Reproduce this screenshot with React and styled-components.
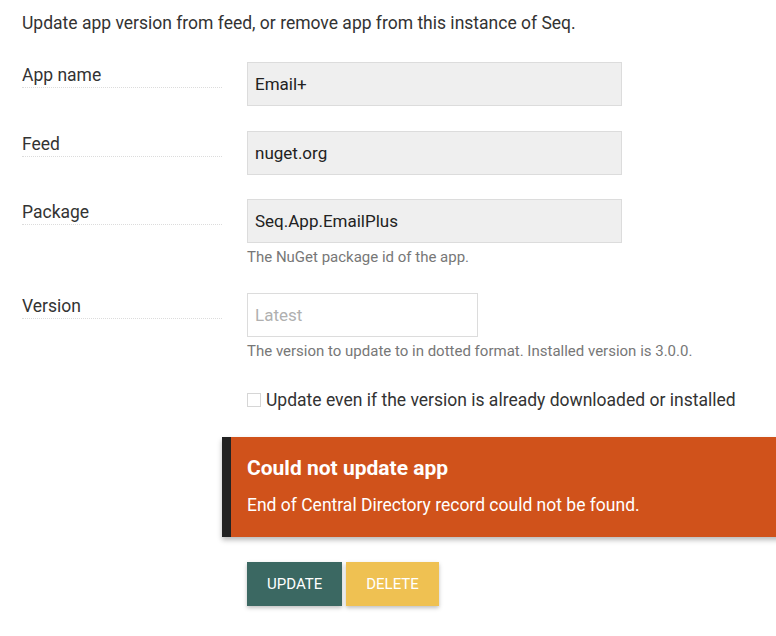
import React from "react";
import styled, { createGlobalStyle } from "styled-components";

const Global = createGlobalStyle`
  html, body { margin: 0; padding: 0; background: #fff; overflow: hidden; }
  body { font-family: Roboto, "Liberation Sans", sans-serif; color: #333; }
  * { box-sizing: border-box; }
`;

const Page = styled.div`
  padding: 11px 0 30px 22px;
  width: 776px;
`;

const Intro = styled.p`
  margin: 0 0 27px;
  font-size: 17.5px;
  line-height: 24px;
  color: #333;
`;

const Row = styled.div`
  display: grid;
  grid-template-columns: 200px 1fr;
  align-items: start;
  margin-bottom: ${(p) => p.$gap || 25}px;
`;

const Label = styled.label`
  display: block;
  font-size: 17.5px;
  line-height: 24px;
  padding-top: 1px;
  color: #333;
  border-bottom: 1px dotted #dcdcdc;
`;

const Field = styled.div`
  padding-left: 25px;
`;

const Input = styled.input`
  display: block;
  width: ${(p) => p.$width || 375}px;
  height: 44px;
  padding: 0 7px;
  font-family: Roboto, "Liberation Sans", sans-serif;
  font-size: 17px;
  color: #222;
  background: ${(p) => (p.readOnly ? "#efefef" : "#fff")};
  border: 1px solid #dcdcdc;
  border-radius: 0;
  outline: none;
  &::placeholder { color: #b0b0b0; }
`;

const Help = styled.div`
  margin-top: 4px;
  font-size: 15px;
  line-height: 20px;
  color: #777;
`;

const CheckRow = styled.label`
  display: flex;
  align-items: center;
  gap: 5px;
  font-size: 17.5px;
  line-height: 24px;
  color: #333;
`;

const Box = styled.span`
  display: inline-block;
  width: 14px;
  height: 14px;
  border: 1px solid #d6d6d6;
  background: #fff;
`;

const ErrorBox = styled.div`
  background: #d0521b;
  border-left: 9px solid #222;
  padding: 18px 24px 20px 16px;
  color: #fff;
  box-shadow: 0 3px 5px rgba(0, 0, 0, 0.28);
  margin-right: -22px;
`;

const ErrorTitle = styled.div`
  font-size: 21px;
  font-weight: 700;
  line-height: 26px;
  margin-bottom: 12px;
`;

const ErrorText = styled.div`
  font-size: 17.5px;
  line-height: 24px;
`;

const Buttons = styled.div`
  display: flex;
  gap: 4px;
  padding-left: 25px;
`;

const Button = styled.button`
  height: 44px;
  padding: 0 ${(p) => p.$pad || 20}px;
  border: none;
  border-radius: 0;
  font-family: Roboto, "Liberation Sans", sans-serif;
  font-size: 15px;
  text-transform: uppercase;
  color: #fff;
  background: ${(p) => p.$bg};
  box-shadow: 0 2px 4px rgba(0, 0, 0, 0.25);
  cursor: pointer;
`;

export default function App() {
  return (
    <>
      <Global />
      <Page>
        <Intro>Update app version from feed, or remove app from this instance of Seq.</Intro>
        <Row>
          <Label>App name</Label>
          <Field>
            <Input readOnly value="Email+" />
          </Field>
        </Row>
        <Row $gap={24}>
          <Label>Feed</Label>
          <Field>
            <Input readOnly value="nuget.org" />
          </Field>
        </Row>
        <Row $gap={26}>
          <Label>Package</Label>
          <Field>
            <Input readOnly value="Seq.App.EmailPlus" />
            <Help>The NuGet package id of the app.</Help>
          </Field>
        </Row>
        <Row $gap={27}>
          <Label>Version</Label>
          <Field>
            <Input $width={231} placeholder="Latest" />
            <Help>The version to update to in dotted format. Installed version is 3.0.0.</Help>
          </Field>
        </Row>
        <Row $gap={25}>
          <div />
          <Field>
            <CheckRow>
              <Box />
              Update even if the version is already downloaded or installed
            </CheckRow>
          </Field>
        </Row>
        <Row>
          <div />
          <ErrorBox>
            <ErrorTitle>Could not update app</ErrorTitle>
            <ErrorText>End of Central Directory record could not be found.</ErrorText>
          </ErrorBox>
        </Row>
        <Row>
          <div />
          <Buttons>
            <Button $bg="#3b6862">Update</Button>
            <Button $bg="#efc152">Delete</Button>
          </Buttons>
        </Row>
      </Page>
    </>
  );
}
